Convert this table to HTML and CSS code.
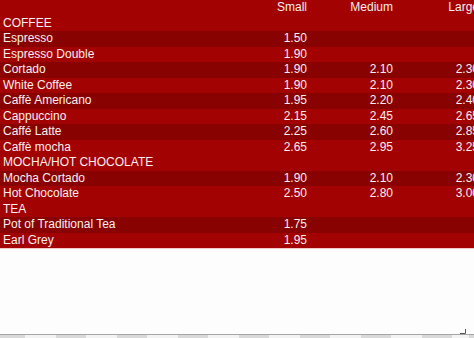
FILE: index.html
```html
<!DOCTYPE html>
<html>
<head>
<meta charset="utf-8">
<link rel="stylesheet" href="styles.css">
</head>
<body>
<div class="sheet">
  <div class="viewport">
    <table class="menu">
      <colgroup>
        <col class="c-name"><col class="c-price"><col class="c-price"><col class="c-price">
      </colgroup>
      <tr><td></td><td class="p">Small</td><td class="p">Medium</td><td class="p">Large</td></tr>
      <tr><td>COFFEE</td><td></td><td></td><td></td></tr>
      <tr class="dark"><td>Espresso</td><td class="p">1.50</td><td></td><td></td></tr>
      <tr><td>Espresso Double</td><td class="p">1.90</td><td></td><td></td></tr>
      <tr class="dark"><td>Cortado</td><td class="p">1.90</td><td class="p">2.10</td><td class="p">2.30</td></tr>
      <tr><td>White Coffee</td><td class="p">1.90</td><td class="p">2.10</td><td class="p">2.30</td></tr>
      <tr class="dark"><td>Caffè Americano</td><td class="p">1.95</td><td class="p">2.20</td><td class="p">2.40</td></tr>
      <tr><td>Cappuccino</td><td class="p">2.15</td><td class="p">2.45</td><td class="p">2.65</td></tr>
      <tr class="dark"><td>Caffé Latte</td><td class="p">2.25</td><td class="p">2.60</td><td class="p">2.85</td></tr>
      <tr><td>Caffè mocha</td><td class="p">2.65</td><td class="p">2.95</td><td class="p">3.25</td></tr>
      <tr><td>MOCHA/HOT CHOCOLATE</td><td></td><td></td><td></td></tr>
      <tr class="dark"><td>Mocha Cortado</td><td class="p">1.90</td><td class="p">2.10</td><td class="p">2.30</td></tr>
      <tr><td>Hot Chocolate</td><td class="p">2.50</td><td class="p">2.80</td><td class="p">3.00</td></tr>
      <tr><td>TEA</td><td></td><td></td><td></td></tr>
      <tr class="dark"><td>Pot of Traditional Tea</td><td class="p">1.75</td><td></td><td></td></tr>
      <tr><td>Earl Grey</td><td class="p">1.95</td><td></td><td></td></tr>
    </table>
    <div class="blank"></div>
  </div>
  <div class="footer">
    <svg class="grip" width="6" height="5" viewBox="0 0 6 5"><path d="M5.5 0v4.5H0" fill="none" stroke="#555" stroke-width="1"/></svg>
  </div>
</div>
</body>
</html>
```

FILE: styles.css
```css
html, body {
  margin: 0;
  padding: 0;
  background: #ffffff;
}

.sheet {
  width: 474px;
  height: 338px;
  overflow: hidden;
  display: flex;
  flex-direction: column;
  font-family: "Liberation Sans", Arial, sans-serif;
}

.viewport {
  height: 334px;
  overflow: hidden;
  background: #fdfdfd;
}

.menu {
  border-collapse: collapse;
  table-layout: fixed;
  width: 480px;
  background: #a20202;
  color: #f6eeee;
  font-size: 12px;
  border-bottom: 1px solid #f3c9c6;
}

.c-name { width: 222px; }
.c-price { width: 86px; }

.menu td {
  height: 15.5px;
  line-height: 15.5px;
  padding: 0 0 0 3px;
  white-space: nowrap;
  overflow: hidden;
}

.menu td.p {
  text-align: right;
  padding: 0 1px 0 0;
}

.menu tr.dark {
  background: #880202;
}

.footer {
  position: relative;
  flex: 1;
  border-top: 1px solid #a6a6a6;
  background: repeating-linear-gradient(90deg, #d9d9d9 0 30px, #f3f3f3 30px 61px);
  background-position: -5px 0;
}

.grip {
  position: absolute;
  right: 8px;
  top: -6px;
}
```
